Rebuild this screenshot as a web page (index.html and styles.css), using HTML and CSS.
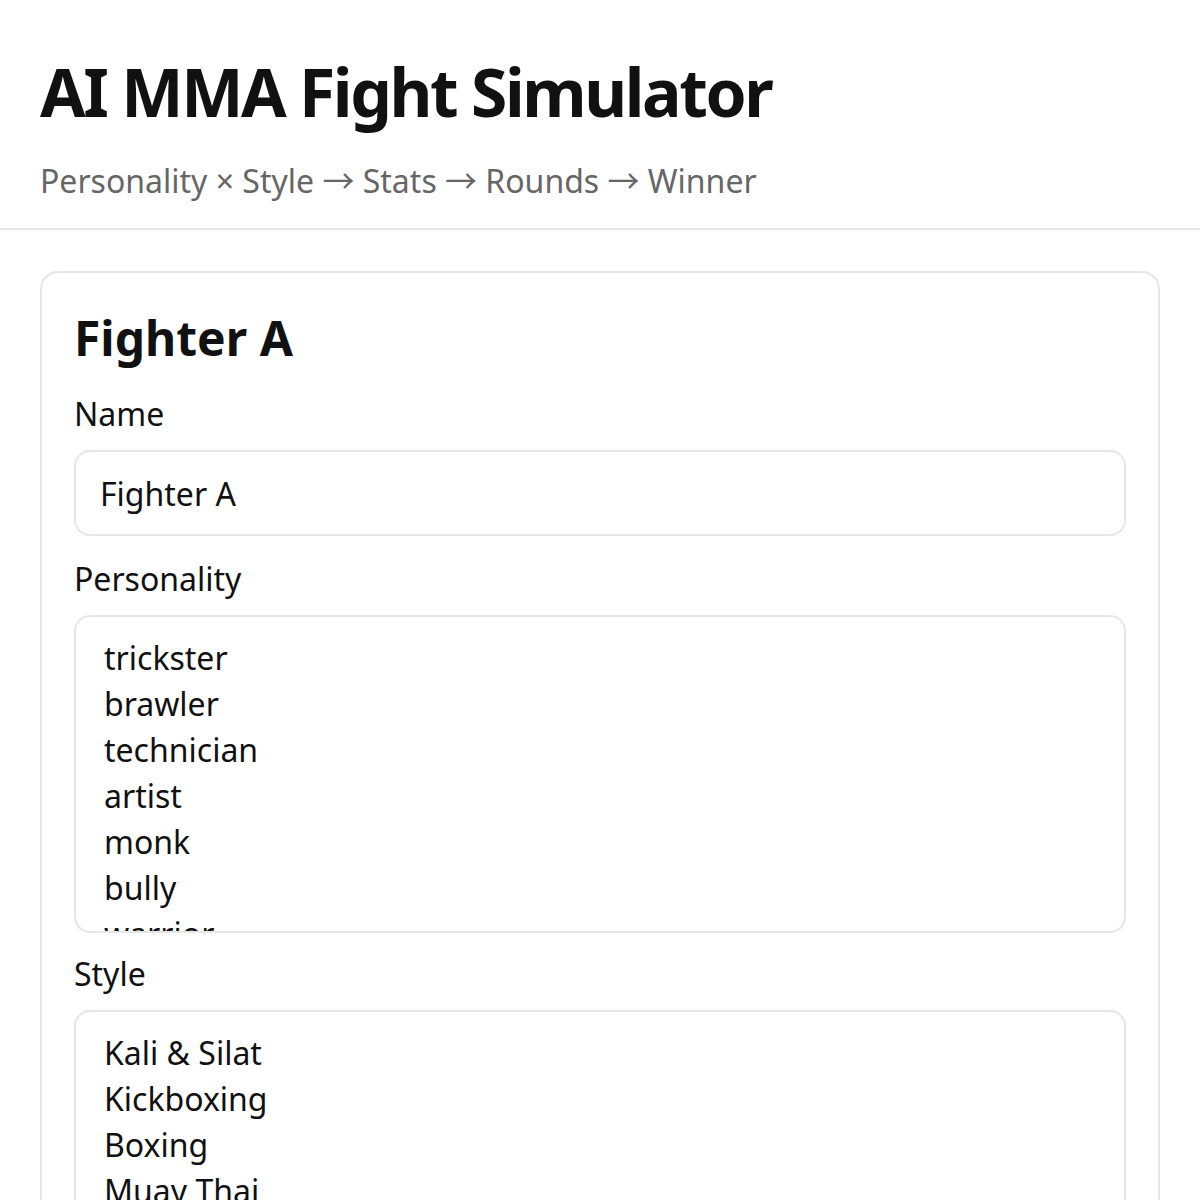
FILE: index.html
```html
<!DOCTYPE html>
<html lang="en">
<head>
    <meta charset="UTF-8">
    <meta name="viewport" content="width=device-width, initial-scale=1.0">
    <title>AI MMA Fight Simulator</title>
    <link rel="stylesheet" href="styles.css">
</head>
<body>
    <header class="header">
        <h1>AI MMA Fight Simulator</h1>
        <p class="tagline">Personality × Style → Stats → Rounds → Winner</p>
    </header>

    <main class="container">
        <!-- Fighter A -->
        <section class="card">
            <h2>Fighter A</h2>
            <label for="name-a">Name</label>
            <input type="text" id="name-a" value="Fighter A">

            <label for="personality-a">Personality</label>
            <select id="personality-a" size="7">
                <option>trickster</option>
                <option>brawler</option>
                <option>technician</option>
                <option>artist</option>
                <option>monk</option>
                <option>bully</option>
                <option>warrior</option>
                <option>showman</option>
                <option>survivor</option>
            </select>

            <label for="style-a">Style</label>
            <select id="style-a" size="7">
                <option>Kali &amp; Silat</option>
                <option>Kickboxing</option>
                <option>Boxing</option>
                <option>Muay Thai</option>
                <option>Wrestling</option>
                <option>Brazilian Jiu-Jitsu</option>
                <option>Judo</option>
                <option>Karate</option>
                <option>Sambo</option>
            </select>
        </section>

        <!-- Fighter B -->
        <section class="card">
            <h2>Fighter B</h2>
            <label for="name-b">Name</label>
            <input type="text" id="name-b" value="Fighter B">

            <label for="personality-b">Personality</label>
            <select id="personality-b" size="7">
                <option>trickster</option>
                <option>brawler</option>
                <option>technician</option>
                <option>artist</option>
                <option>monk</option>
                <option>bully</option>
                <option>warrior</option>
            </select>

            <label for="style-b">Style</label>
            <select id="style-b" size="7">
                <option>Kali &amp; Silat</option>
                <option>Kickboxing</option>
                <option>Boxing</option>
                <option>Muay Thai</option>
                <option>Wrestling</option>
                <option>Judo</option>
                <option>Karate</option>
            </select>
        </section>

        <button class="fight-btn">Simulate Fight</button>
    </main>
</body>
</html>
```

FILE: styles.css
```css
body {
    margin: 0;
    font-family: "Noto Sans", "Noto Sans CJK SC", sans-serif;
    background: #fff;
    color: #111;
}
.header {
    padding: 46px 40px 26px;
    border-bottom: 2px solid #e6e6e6;
}
h1 {
    margin: 0 0 23px;
    font-size: 66px;
    font-weight: bold;
    letter-spacing: -2.4px;
    line-height: normal;
}
.tagline {
    margin: 0;
    font-size: 32px;
    line-height: 43px;
    color: #666;
}
.container {
    padding: 41px 40px 40px;
}
.card {
    display: flex;
    flex-direction: column;
    border: 2px solid #e6e6e6;
    border-radius: 18px;
    padding: 32px;
    margin-bottom: 40px;
}
h2 {
    margin: 0 0 22px;
    font-size: 48px;
    font-weight: bold;
    line-height: normal;
}
label {
    font-size: 32px;
    line-height: 44px;
    margin-bottom: 14px;
}
input, select {
    font-family: inherit;
    font-size: 32px;
    color: #111;
    border: 2px solid #e6e6e6;
    border-radius: 16px;
    background: #fff;
    margin: 0 0 21px;
    outline: none;
}
input {
    height: 86px;
    box-sizing: border-box;
    padding: 0 24px;
}
select {
    height: 318px;
    box-sizing: border-box;
    padding: 17px 24px 18px;
    margin-bottom: 19px;
    overflow: hidden;
    scrollbar-width: none;
}
option {
    padding: 1.5px 4px;
}
.fight-btn {
    font-family: inherit;
    font-size: 32px;
    background: #111;
    color: #fff;
    border: none;
    padding: 20px 40px;
    border-radius: 16px;
    cursor: pointer;
}
```
